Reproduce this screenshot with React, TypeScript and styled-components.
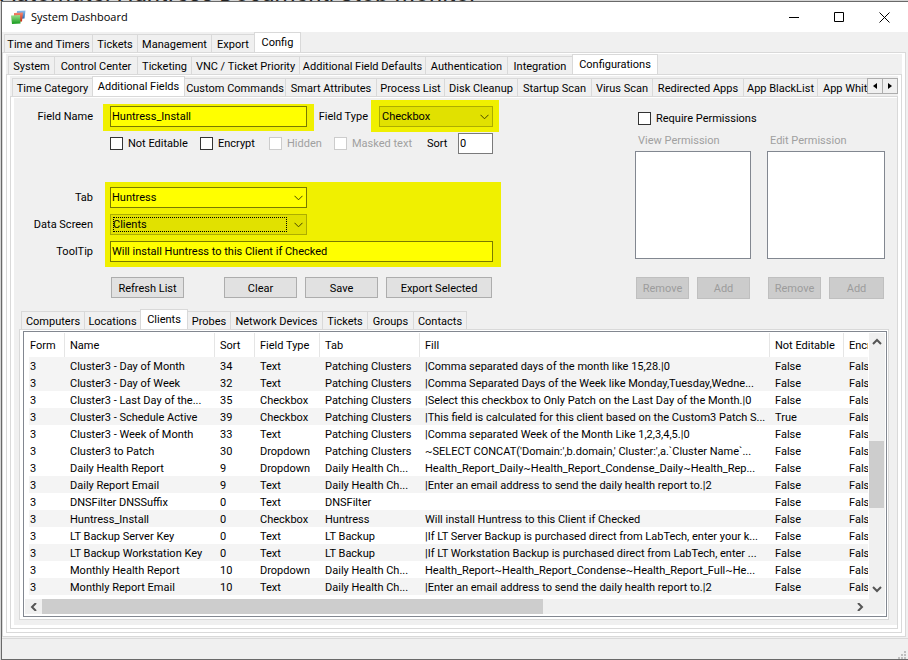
import React from "react";
import styled, { createGlobalStyle, css } from "styled-components";

const GlobalStyle = createGlobalStyle`
  *, *::before, *::after { box-sizing: border-box; }
  body { margin: 0; background: #d6d6d6; }
  body, button, input, select, table {
    font-family: Roboto, "Liberation Sans", sans-serif;
    font-size: 11px;
    line-height: 13px;
    color: #000;
  }
`;

const line = "#d9d9d9";
const face = "#f0f0f0";

/* ---------- window frame ---------- */

const Desktop = styled.div`
  display: flex;
  flex-direction: column;
  min-height: 100vh;
`;

const Behind = styled.div`
  display: flex;
  align-items: flex-end;
  height: 1px;
  overflow: hidden;
  background: #d6d6d6;
  color: #222;
  font-size: 24px;
  line-height: 16px;
  white-space: nowrap;
`;

const Window = styled.main`
  flex: 1;
  display: flex;
  flex-direction: column;
  margin-left: 1px;
  padding-right: 2px;
  border: 1px solid #696969;
  border-right: 0;
  background: ${face};
`;

const TitleBar = styled.header`
  display: flex;
  align-items: center;
  height: 30px;
  margin-right: -2px;
  padding-left: 9px;
  gap: 5px;
  background: #fff;
`;

const Title = styled.h1`
  flex: 1;
  margin: 0;
  font: 400 11px/16px "Open Sans", "Noto Sans", sans-serif;
`;

const CaptionButton = styled.button`
  display: grid;
  place-items: center;
  width: 40px;
  height: 30px;
  padding: 0;
  border: 0;
  background: transparent;
`;

const CaptionButtons = styled.div`
  display: flex;
  gap: 5px;
  padding-right: 4px;
`;

const StatusBar = styled.footer`
  display: flex;
  align-items: flex-end;
  justify-content: flex-end;
  height: 21px;
  margin: 1px -2px 0 0;
  padding-right: 2px;
  border-top: 1px solid ${line};
`;

/* ---------- tabs ---------- */

const TabControl = styled.section`
  flex: 1;
  display: flex;
  flex-direction: column;
  min-width: 0;
  background: ${face};
`;

const TabStrip = styled.div`
  display: flex;
  align-items: flex-end;
  height: 20px;
  padding-left: 2px;
  overflow: hidden;
`;

const TabList = styled.div`
  flex: 1;
  display: flex;
  align-items: flex-end;
  min-width: 0;
  overflow: hidden;
`;

const Tab = styled.button<{ $width: number; $selected: boolean }>`
  flex: none;
  width: ${(p) => p.$width}px;
  height: 18px;
  padding: 2px 0 0;
  border: 1px solid ${line};
  border-width: 1px 0 0 1px;
  background: ${face};
  text-align: center;
  white-space: nowrap;
  &:last-child { border-right-width: 1px; }
  ${(p) =>
    p.$selected &&
    css`
      height: 20px;
      padding: 0 0 1px;
      background: #fff;
      border-right-width: 1px;
      & + button { border-left-width: 0; }
    `}
`;

const TabPage = styled.div<{ $pad: string }>`
  flex: 1;
  display: flex;
  flex-direction: column;
  min-width: 0;
  padding: ${(p) => p.$pad};
  border: 1px solid ${line};
  background: #fff;
`;

const Scroller = styled.div`
  display: flex;
  align-self: flex-start;
  padding-top: 2px;
`;

const ScrollerButton = styled.button`
  display: grid;
  place-items: center;
  width: 16px;
  height: 16px;
  padding: 0;
  border: 1px solid #adadad;
  background: ${face};
  & + & { margin-left: -1px; }
`;

type TabDef = [label: string, width: number];

function Tabs({
  label, tabs, selected, pad, scroll, children,
}: {
  label: string; tabs: TabDef[]; selected: string; pad: string; scroll?: boolean; children: React.ReactNode;
}) {
  return (
    <TabControl>
      <TabStrip>
        <TabList role="tablist" aria-label={label}>
          {tabs.map(([name, width]) => (
            <Tab key={name} role="tab" aria-selected={name === selected} $width={width} $selected={name === selected}>
              {name}
            </Tab>
          ))}
        </TabList>
        {scroll && (
          <Scroller>
            <ScrollerButton aria-label="Previous tabs">
              <svg width="4" height="6" viewBox="0 0 4 6"><path d="M4 0v6L0 3z" /></svg>
            </ScrollerButton>
            <ScrollerButton aria-label="More tabs">
              <svg width="4" height="6" viewBox="0 0 4 6"><path d="M0 0v6l4-3z" /></svg>
            </ScrollerButton>
          </Scroller>
        )}
      </TabStrip>
      <TabPage $pad={pad}>{children}</TabPage>
    </TabControl>
  );
}

/* ---------- form ---------- */

const Panel = styled.div`
  flex: 1;
  display: flex;
  flex-direction: column;
  padding: 2px 8px 5px 5px;
  background: ${face};
`;

const Upper = styled.div`
  display: flex;
  justify-content: space-between;
  margin: 0 4px 10px -5px;
`;

const FieldForm = styled.form`
  width: 490px;
`;

const TopRow = styled.div`
  display: flex;
  align-items: flex-start;
  height: 32px;
`;

const Label = styled.label<{ $width: number }>`
  width: ${(p) => p.$width}px;
  line-height: 21px;
  text-align: right;
  white-space: nowrap;
`;

const TopLabel = styled(Label)`
  padding-top: 6px;
`;

const Mark = styled.div<{ $pad: string; $margin: string }>`
  display: grid;
  gap: 6px;
  padding: ${(p) => p.$pad};
  margin: ${(p) => p.$margin};
  background: #f0f000;
`;

const TextBox = styled.input<{ $width: number; $marked?: boolean }>`
  width: ${(p) => p.$width}px;
  height: 21px;
  padding: 0 1px;
  border: 1px solid ${(p) => (p.$marked ? "#7a7a00" : "#7a7a7a")};
  background: ${(p) => (p.$marked ? "#ff0" : "#fff")};
  outline: 0;
`;

const SelectWrap = styled.div<{ $width: number }>`
  position: relative;
  width: ${(p) => p.$width}px;
  height: 21px;
  svg {
    position: absolute;
    top: 8px;
    right: 4px;
    pointer-events: none;
  }
`;

const SelectBox = styled.select<{ $flat: boolean }>`
  appearance: none;
  width: 100%;
  height: 100%;
  padding: 0 20px 0 ${(p) => (p.$flat ? 1 : 2)}px;
  border: 1px solid ${(p) => (p.$flat ? "#7a7a00" : "#adad00")};
  border-radius: 0;
  background: ${(p) => (p.$flat ? "#ff0" : "#e1e100")};
  outline: 0;
`;

const FocusBox = styled.span`
  position: absolute;
  inset: 3px 20px 3px 3px;
  border: 1px dotted #000;
  pointer-events: none;
`;

function DropDown({ id, value, width, flat = false, focused = false }: {
  id: string; value: string; width: number; flat?: boolean; focused?: boolean;
}) {
  return (
    <SelectWrap $width={width}>
      <SelectBox id={id} defaultValue={value} $flat={flat}>
        <option>{value}</option>
      </SelectBox>
      {focused && <FocusBox />}
      <svg width="9" height="6" viewBox="0 0 9 6" fill="none" stroke="#444400">
        <path d="M0.5 0.8l4 4 4-4" />
      </svg>
    </SelectWrap>
  );
}

const OptionsRow = styled.div`
  display: grid;
  grid-template-columns: 90px 69px 65px 93px 31px 35px;
  align-items: center;
  margin: 1px 0 28px;
  padding-left: 96px;
`;

const CheckLabel = styled.label<{ $off?: boolean }>`
  display: flex;
  align-items: center;
  gap: 5px;
  white-space: nowrap;
  color: ${(p) => (p.$off ? "#a0a0a0" : "#000")};
`;

const Check = styled.input`
  appearance: none;
  width: 13px;
  height: 13px;
  margin: 0;
  border: 1px solid #333;
  background: #fff;
  &:disabled { border-color: #ccc; }
`;

const DetailRows = styled.div`
  display: flex;
`;

const DetailLabels = styled.div`
  display: grid;
  gap: 6px;
  padding: 5px 0;
`;

const Actions = styled.div`
  display: flex;
  gap: 8px;
  margin-top: 10px;
  padding-left: 97px;
`;

const PushButton = styled.button<{ $width: number; $apart?: boolean }>`
  width: ${(p) => p.$width}px;
  height: 21px;
  padding: 1px 0 0;
  margin-right: ${(p) => (p.$apart ? 32 : 0)}px;
  border: 1px solid #adadad;
  background: #e1e1e1;
  white-space: nowrap;
  &:disabled {
    height: 22px;
    border-color: #bfbfbf;
    background: #ccc;
    color: #9c9c9c;
  }
`;

/* ---------- permissions ---------- */

const Permissions = styled.div`
  width: 250px;
  padding-top: 12px;
  & > label { padding-left: 3px; }
`;

const PermissionColumns = styled.div`
  display: flex;
  gap: 16px;
  margin-top: 9px;
`;

const PermissionColumn = styled.div<{ $width: number }>`
  width: ${(p) => p.$width}px;
`;

const Caption = styled.div`
  padding: 0 0 4px 3px;
  color: #a0a0a0;
`;

const ListBox = styled.div`
  height: 108px;
  margin-bottom: 18px;
  border: 1px solid #828790;
  background: #fff;
`;

const ButtonPair = styled.div`
  display: flex;
  gap: 8px;
  padding-left: 1px;
`;

/* ---------- list view ---------- */

const ListView = styled.div`
  display: grid;
  grid-template-columns: minmax(0, 1fr) 16px;
  padding: 1px 1px 2px;
  border: 1px solid #828790;
  background: #fff;
`;

const ListViewport = styled.div`
  overflow: hidden;
  padding: 0 1px 4px 4px;
`;

const ListClip = styled.div`
  overflow: hidden;
`;

const Grid = styled.table`
  width: calc(100% + 26px);
  table-layout: fixed;
  border-collapse: separate;
  border-spacing: 0;
  th, td {
    overflow: hidden;
    padding: 0 0 0 5px;
    font-weight: 400;
    text-align: left;
    white-space: nowrap;
  }
  th {
    height: 24px;
    border-right: 1px solid #e5e5e5;
  }
  td {
    height: 17px;
    padding-top: 2px;
  }
  th:first-child, td:first-child { padding-left: 1px; }
`;

const Row = styled.tr<{ $shaded: boolean }>`
  background: ${(p) => (p.$shaded ? "#f4f4f4" : "#fff")};
`;

const VScroll = styled.div`
  display: flex;
  flex-direction: column;
  align-items: center;
  padding: 1px 0 3px;
  background: ${face};
`;

const HScroll = styled.div`
  grid-column: 1 / -1;
  display: flex;
  align-items: center;
  height: 15px;
  background: ${face};
`;

const ArrowButton = styled.button`
  display: grid;
  place-items: center;
  flex: none;
  width: 17px;
  height: 15px;
  padding: 0;
  border: 0;
  background: transparent;
`;

const VTrack = styled.div`
  flex: 1;
  align-self: stretch;
  display: grid;
  grid-template-rows: 91fr 66fr 72fr;
`;

const HTrack = styled.div`
  flex: 1;
  align-self: stretch;
  display: grid;
  grid-template-columns: 501fr 308fr;
`;

const Thumb = styled.div<{ $vertical?: boolean }>`
  background: #cdcdcd;
  ${(p) => p.$vertical && "grid-row: 2; margin-right: 1px;"}
`;

const Corner = styled.div`
  width: 17px;
`;

const columns: [string, string][] = [
  ["Form", "36px"], ["Name", "150px"], ["Sort", "40px"], ["Field Type", "65px"],
  ["Tab", "100px"], ["Fill", "auto"], ["Not Editable", "74px"], ["Encrypt", "50px"],
];

const rows: [boolean, string, string, string, string, string, string][] = [
  [true, "Cluster3 - Day of Month", "34", "Text", "Patching Clusters", "|Comma separated days of the month like 15,28.|0", "False"],
  [true, "Cluster3 - Day of Week", "32", "Text", "Patching Clusters", "|Comma Separated Days of the Week like Monday,Tuesday,Wedne...", "False"],
  [false, "Cluster3 - Last Day of the...", "35", "Checkbox", "Patching Clusters", "|Select this checkbox to Only Patch on the Last Day of the Month.|0", "False"],
  [true, "Cluster3 - Schedule Active", "39", "Checkbox", "Patching Clusters", "|This field is calculated for this client based on the Custom3 Patch S...", "True"],
  [false, "Cluster3 - Week of Month", "33", "Text", "Patching Clusters", "|Comma separated Week of the Month Like 1,2,3,4,5.|0", "False"],
  [false, "Cluster3 to Patch", "30", "Dropdown", "Patching Clusters", "~SELECT CONCAT('Domain:',b.domain,' Cluster:',a.`Cluster Name`...", "False"],
  [false, "Daily Health Report", "9", "Dropdown", "Daily Health Ch...", "Health_Report_Daily~Health_Report_Condense_Daily~Health_Rep...", "False"],
  [true, "Daily Report Email", "9", "Text", "Daily Health Ch...", "|Enter an email address to send the daily health report to.|2", "False"],
  [false, "DNSFilter DNSSuffix", "0", "Text", "DNSFilter", "", "False"],
  [true, "Huntress_Install", "0", "Checkbox", "Huntress", "Will install Huntress to this Client if Checked", "False"],
  [false, "LT Backup Server Key", "0", "Text", "LT Backup", "|If LT Server Backup is purchased direct from LabTech, enter your k...", "False"],
  [true, "LT Backup Workstation Key", "0", "Text", "LT Backup", "|If LT Workstation Backup is purchased direct from LabTech, enter ...", "False"],
  [false, "Monthly Health Report", "10", "Dropdown", "Daily Health Ch...", "Health_Report~Health_Report_Condense~Health_Report_Full~He...", "False"],
  [true, "Monthly Report Email", "10", "Text", "Daily Health Ch...", "|Enter an email address to send the daily health report to.|2", "False"],
];

const mainTabs: TabDef[] = [["Time and Timers", 88], ["Tickets", 45], ["Management", 74], ["Export", 43], ["Config", 47]];
const configTabs: TabDef[] = [
  ["System", 46], ["Control Center", 83], ["Ticketing", 54], ["VNC / Ticket Priority", 108],
  ["Additional Field Defaults", 126], ["Authentication", 82], ["Integration", 65], ["Configurations", 86],
];
const fieldTabs: TabDef[] = [
  ["Time Category", 80], ["Additional Fields", 93], ["Custom Commands", 100], ["Smart Attributes", 91],
  ["Process List", 68], ["Disk Cleanup", 73], ["Startup Scan", 74], ["Virus Scan", 61],
  ["Redirected Apps", 91], ["App BlackList", 74], ["App WhiteList", 80],
];
const screenTabs: TabDef[] = [
  ["Computers", 63], ["Locations", 56], ["Clients", 48], ["Probes", 42],
  ["Network Devices", 92], ["Tickets", 45], ["Groups", 46], ["Contacts", 54],
];

const arrows = {
  up: "M1 6l4-4 4 4", down: "M1 2l4 4 4-4", left: "M7 0L3 4l4 4", right: "M3 0l4 4-4 4",
};

function Arrow({ dir }: { dir: keyof typeof arrows }) {
  return (
    <svg width="10" height="8" viewBox="0 0 10 8" fill="none" stroke="#555" strokeWidth="2">
      <path d={arrows[dir]} />
    </svg>
  );
}

function AppIcon() {
  return (
    <svg width="15" height="15" viewBox="0 0 15 15" aria-hidden="true">
      <defs>
        <linearGradient id="ig" x1="0" y1="0" x2="0" y2="1">
          <stop offset="0" stopColor="#9be08f" /><stop offset="1" stopColor="#149a1c" />
        </linearGradient>
        <linearGradient id="ir" x1="0" y1="0" x2="0" y2="1">
          <stop offset="0" stopColor="#f58a72" /><stop offset="1" stopColor="#c8210c" />
        </linearGradient>
        <linearGradient id="ib" x1="0" y1="0" x2="0" y2="1">
          <stop offset="0" stopColor="#8fc0ee" /><stop offset="1" stopColor="#2465b0" />
        </linearGradient>
      </defs>
      <path d="M6 1L14.500 0.500l-1 8-8 .5z" fill="url(#ib)" />
      <path d="M3 3l9-.5-1 9-8 .5z" fill="url(#ir)" />
      <path d="M0 5.500l9-.5 .5 8.500-8.500 .5z" fill="url(#ig)" />
    </svg>
  );
}

function PermissionList({ title, width, addWidth }: { title: string; width: number; addWidth: number }) {
  return (
    <PermissionColumn $width={width}>
      <Caption>{title}</Caption>
      <ListBox role="listbox" aria-label={title} />
      <ButtonPair>
        <PushButton type="button" disabled $width={53}>Remove</PushButton>
        <PushButton type="button" disabled $width={addWidth}>Add</PushButton>
      </ButtonPair>
    </PermissionColumn>
  );
}

function FieldEditor() {
  return (
    <FieldForm onSubmit={(e) => e.preventDefault()}>
      <TopRow>
        <TopLabel htmlFor="name" $width={79}>Field Name</TopLabel>
        <Mark $pad="2px 7px 4px" $margin="4px 0 0 10px">
          <TextBox id="name" defaultValue="Huntress_Install" $width={197} $marked />
        </Mark>
        <TopLabel htmlFor="type" $width={54}>Field Type</TopLabel>
        <Mark $pad="6px 6px 5px 8px" $margin="0 0 0 3px">
          <DropDown id="type" value="Checkbox" width={114} />
        </Mark>
      </TopRow>
      <OptionsRow>
        <CheckLabel><Check type="checkbox" />Not Editable</CheckLabel>
        <CheckLabel><Check type="checkbox" />Encrypt</CheckLabel>
        <CheckLabel $off><Check type="checkbox" disabled />Hidden</CheckLabel>
        <CheckLabel $off><Check type="checkbox" disabled />Masked text</CheckLabel>
        <label htmlFor="sort">Sort</label>
        <TextBox id="sort" defaultValue="0" $width={35} />
      </OptionsRow>
      <DetailRows>
        <DetailLabels>
          <Label htmlFor="tab" $width={79}>Tab</Label>
          <Label htmlFor="screen" $width={79}>Data Screen</Label>
          <Label htmlFor="tip" $width={79}>ToolTip</Label>
        </DetailLabels>
        <Mark $pad="5px 8px 5px 5px" $margin="0 0 0 12px">
          <DropDown id="tab" value="Huntress" width={197} flat />
          <DropDown id="screen" value="Clients" width={197} focused />
          <TextBox id="tip" defaultValue="Will install Huntress to this Client if Checked" $width={383} $marked />
        </Mark>
      </DetailRows>
      <Actions>
        <PushButton type="button" $width={73} $apart>Refresh List</PushButton>
        <PushButton type="button" $width={73}>Clear</PushButton>
        <PushButton type="button" $width={73}>Save</PushButton>
        <PushButton type="button" $width={106}>Export Selected</PushButton>
      </Actions>
    </FieldForm>
  );
}

function FieldList() {
  return (
    <ListView>
      <ListViewport>
        <ListClip>
          <Grid>
            <colgroup>
              {columns.map(([name, width]) => <col key={name} style={{ width }} />)}
            </colgroup>
            <thead>
              <tr>{columns.map(([name]) => <th key={name} scope="col">{name}</th>)}</tr>
            </thead>
            <tbody>
              {rows.map(([shaded, ...cells]) => (
                <Row key={cells[0]} $shaded={shaded}>
                  <td>3</td>
                  {cells.map((cell, i) => <td key={i}>{cell}</td>)}
                  <td>False</td>
                </Row>
              ))}
            </tbody>
          </Grid>
        </ListClip>
      </ListViewport>
      <VScroll>
        <ArrowButton aria-label="Scroll up"><Arrow dir="up" /></ArrowButton>
        <VTrack><Thumb $vertical /></VTrack>
        <ArrowButton aria-label="Scroll down"><Arrow dir="down" /></ArrowButton>
      </VScroll>
      <HScroll>
        <ArrowButton aria-label="Scroll left"><Arrow dir="left" /></ArrowButton>
        <HTrack><Thumb /></HTrack>
        <ArrowButton aria-label="Scroll right"><Arrow dir="right" /></ArrowButton>
        <Corner />
      </HScroll>
    </ListView>
  );
}

export default function App() {
  return (
    <>
      <GlobalStyle />
      <Desktop>
        <Behind aria-hidden="true">Automate: Huntress Document/Stop Monitor</Behind>
        <Window>
          <TitleBar>
            <AppIcon />
            <Title>System Dashboard</Title>
            <CaptionButtons>
              <CaptionButton aria-label="Minimize">
                <svg width="10" height="11"><path d="M0 5.500h10" stroke="#000" /></svg>
              </CaptionButton>
              <CaptionButton aria-label="Maximize">
                <svg width="10" height="10"><path d="M.5 .5h9v9h-9z" fill="none" stroke="#000" /></svg>
              </CaptionButton>
              <CaptionButton aria-label="Close">
                <svg width="11" height="11"><path d="M.5 .5l10 10M10.500 .5l-10 10" stroke="#000" /></svg>
              </CaptionButton>
            </CaptionButtons>
          </TitleBar>
          <Tabs label="Dashboard" tabs={mainTabs} selected="Config" pad="1px 3px 3px">
            <Tabs label="Config" tabs={configTabs} selected="Configurations" pad="1px 3px 3px">
              <Tabs label="Configurations" tabs={fieldTabs} selected="Additional Fields" pad="1px 0 3px 3px" scroll>
                <Panel>
                  <Upper>
                    <FieldEditor />
                    <Permissions>
                      <CheckLabel><Check type="checkbox" />Require Permissions</CheckLabel>
                      <PermissionColumns>
                        <PermissionList title="View Permission" width={116} addWidth={53} />
                        <PermissionList title="Edit Permission" width={118} addWidth={55} />
                      </PermissionColumns>
                    </Permissions>
                  </Upper>
                  <Tabs label="Data screen" tabs={screenTabs} selected="Clients" pad="1px 1px 2px 3px">
                    <FieldList />
                  </Tabs>
                </Panel>
              </Tabs>
            </Tabs>
          </Tabs>
          <StatusBar>
            <svg width="8" height="8" viewBox="0 0 8 8" fill="#bfbfbf" aria-hidden="true">
              <path d="M6 0h2v2h-2zM3 3h2v2h-2zM6 3h2v2h-2zM0 6h2v2h-2zM3 6h2v2h-2zM6 6h2v2h-2z" />
            </svg>
          </StatusBar>
        </Window>
      </Desktop>
    </>
  );
}
